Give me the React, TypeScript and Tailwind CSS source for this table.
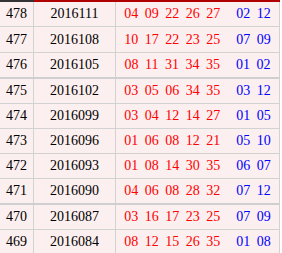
const rows = [
	{ no: "478", issue: "2016111", red: ["04", "09", "22", "26", "27"], blue: ["02", "12"] },
	{ no: "477", issue: "2016108", red: ["10", "17", "22", "23", "25"], blue: ["07", "09"] },
	{ no: "476", issue: "2016105", red: ["08", "11", "31", "34", "35"], blue: ["01", "02"], thick: true },
	{ no: "475", issue: "2016102", red: ["03", "05", "06", "34", "35"], blue: ["03", "12"] },
	{ no: "474", issue: "2016099", red: ["03", "04", "12", "14", "27"], blue: ["01", "05"] },
	{ no: "473", issue: "2016096", red: ["01", "06", "08", "12", "21"], blue: ["05", "10"] },
	{ no: "472", issue: "2016093", red: ["01", "08", "14", "30", "35"], blue: ["06", "07"] },
	{ no: "471", issue: "2016090", red: ["04", "06", "08", "28", "32"], blue: ["07", "12"], thick: true },
	{ no: "470", issue: "2016087", red: ["03", "16", "17", "23", "25"], blue: ["07", "09"] },
	{ no: "469", issue: "2016084", red: ["08", "12", "15", "26", "35"], blue: ["01", "08"] },
];

export default function App() {
	return (
		<div className="w-[282px] h-[253px] overflow-hidden bg-white font-['Liberation_Serif',serif] text-[14px] leading-none">
			<div className="w-[280px] flex">
				<div className="w-[34px] h-[2px] bg-[#333333]" />
				<div className="w-[246px] h-[2px] bg-[#b00000]" />
			</div>
			{rows.map((r, i) => (
				<div
					key={r.no}
					className={`w-[280px] flex bg-[#fcefef] ${i === 1 ? "h-[26px]" : "h-[25px]"} ${
						r.thick ? "border-b-2 border-[#cfcfcf] h-[26px]" : "border-b border-[#d2d2d2]"
					}`}
				>
					<div className="w-[34px] border-r border-[#d2d2d2] flex items-center justify-center text-black">
						{r.no}
					</div>
					<div className="w-[82px] border-r border-[#d2d2d2] flex items-center justify-center text-black">
						{r.issue}
					</div>
					<div className="w-[164px] border-r border-[#d2d2d2] flex items-center justify-center">
						<div className="flex gap-[6.5px] text-[#ff0000]">
							{r.red.map((n, j) => (
								<span key={j}>{n}</span>
							))}
						</div>
						<div className="flex gap-[6.5px] text-[#0000ff] ml-[16px]">
							{r.blue.map((n, j) => (
								<span key={j}>{n}</span>
							))}
						</div>
					</div>
				</div>
			))}
		</div>
	);
}
